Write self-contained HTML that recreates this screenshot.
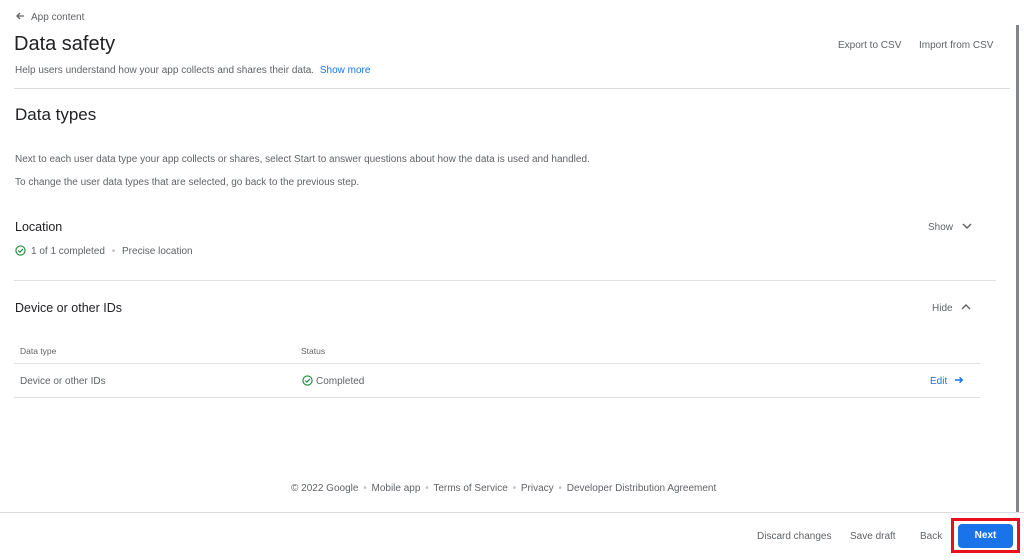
<!DOCTYPE html>
<html><head><style>
*{margin:0;padding:0;box-sizing:border-box}
body{width:1024px;height:560px;background:#fff;font-family:"Liberation Sans",Arial,sans-serif;color:#202124;position:relative;overflow:hidden}
.a{position:absolute;white-space:nowrap}
.s{font-size:10px;color:#5f6368}
.hr{position:absolute;height:1px;background:#e0e0e0}
</style></head><body>
<div class="a s" style="left:15px;top:11px;font-size:10px">
<svg width="10" height="10" viewBox="0 0 10 10" style="vertical-align:-1px;margin-right:6px"><path d="M9 5H2M5 2L2 5l3 3" stroke="#5f6368" stroke-width="1.3" fill="none"/></svg>App content</div>
<div class="a" style="left:14px;top:33px;font-size:20px">Data safety</div>
<div class="a s" style="left:15px;top:65px">Help users understand how your app collects and shares their data. <span style="color:#1a73e8;margin-left:3px">Show more</span></div>
<div class="a s" style="left:838px;top:40px">Export to CSV</div>
<div class="a s" style="left:919px;top:40px">Import from CSV</div>
<div class="hr" style="left:14px;top:88px;width:996px;background:#dadce0"></div>
<div class="a" style="left:1016px;top:25px;width:3px;height:488px;background:#80868b"></div>
<div class="a" style="left:15px;top:105px;font-size:17px">Data types</div>
<div class="a s" style="left:15px;top:154px">Next to each user data type your app collects or shares, select Start to answer questions about how the data is used and handled.</div>
<div class="a s" style="left:15px;top:177px">To change the user data types that are selected, go back to the previous step.</div>
<div class="a" style="left:15px;top:220px;font-size:12.5px">Location</div>
<div class="a s" style="left:928px;top:222px">Show <svg width="10" height="8" viewBox="0 0 10 8" style="margin-left:6px"><path d="M1 2l4 4 4-4" stroke="#5f6368" stroke-width="1.4" fill="none"/></svg></div>
<div class="a s" style="left:15px;top:245px"><svg width="11" height="11" viewBox="0 0 12 12" style="vertical-align:-2px;margin-right:5px"><circle cx="6" cy="6" r="5" stroke="#1e8e3e" stroke-width="1.3" fill="none"/><path d="M3.5 6l1.8 1.8L8.6 4.4" stroke="#1e8e3e" stroke-width="1.3" fill="none"/></svg>1 of 1 completed <span style="color:#bdc1c6;margin:0 4px">•</span> Precise location</div>
<div class="hr" style="left:14px;top:280px;width:982px"></div>
<div class="a" style="left:15px;top:301px;font-size:12.5px">Device or other IDs</div>
<div class="a s" style="left:932px;top:303px">Hide <svg width="10" height="8" viewBox="0 0 10 8" style="margin-left:6px"><path d="M1 6l4-4 4 4" stroke="#5f6368" stroke-width="1.4" fill="none"/></svg></div>
<div class="a s" style="left:20px;top:346px;font-size:8.5px">Data type</div>
<div class="a s" style="left:301px;top:346px;font-size:8.5px">Status</div>
<div class="hr" style="left:14px;top:363px;width:966px"></div>
<div class="a s" style="left:20px;top:376px">Device or other IDs</div>
<div class="a s" style="left:302px;top:375px"><svg width="11" height="11" viewBox="0 0 12 12" style="vertical-align:-2px;margin-right:3px"><circle cx="6" cy="6" r="5" stroke="#1e8e3e" stroke-width="1.3" fill="none"/><path d="M3.5 6l1.8 1.8L8.6 4.4" stroke="#1e8e3e" stroke-width="1.3" fill="none"/></svg>Completed</div>
<div class="a s" style="left:930px;top:376px;color:#1a73e8">Edit <svg width="10" height="8" viewBox="0 0 10 8" style="margin-left:4px"><path d="M1 4h7M5.5 1.3L8.3 4 5.5 6.7" stroke="#1a73e8" stroke-width="1.4" fill="none"/></svg></div>
<div class="hr" style="left:14px;top:397px;width:966px"></div>
<div class="a s" style="left:291px;top:483px">© 2022 Google <span style="color:#bdc1c6;margin:0 2px">•</span> Mobile app <span style="color:#bdc1c6;margin:0 2px">•</span> Terms of Service <span style="color:#bdc1c6;margin:0 2px">•</span> Privacy <span style="color:#bdc1c6;margin:0 2px">•</span> Developer Distribution Agreement</div>
<div class="hr" style="left:0;top:512px;width:1024px;background:#dadce0"></div>
<div class="a s" style="left:757px;top:531px">Discard changes</div>
<div class="a s" style="left:850px;top:531px">Save draft</div>
<div class="a s" style="left:920px;top:531px">Back</div>
<div class="a" style="left:951px;top:518px;width:69px;height:35px;border:3px solid #e8101c"></div>
<div class="a" style="left:958px;top:524px;width:55px;height:24px;background:#1a73e8;border-radius:4px;color:#fff;font-size:10px;font-weight:bold;text-align:center;line-height:24px">Next</div>
</body></html>
